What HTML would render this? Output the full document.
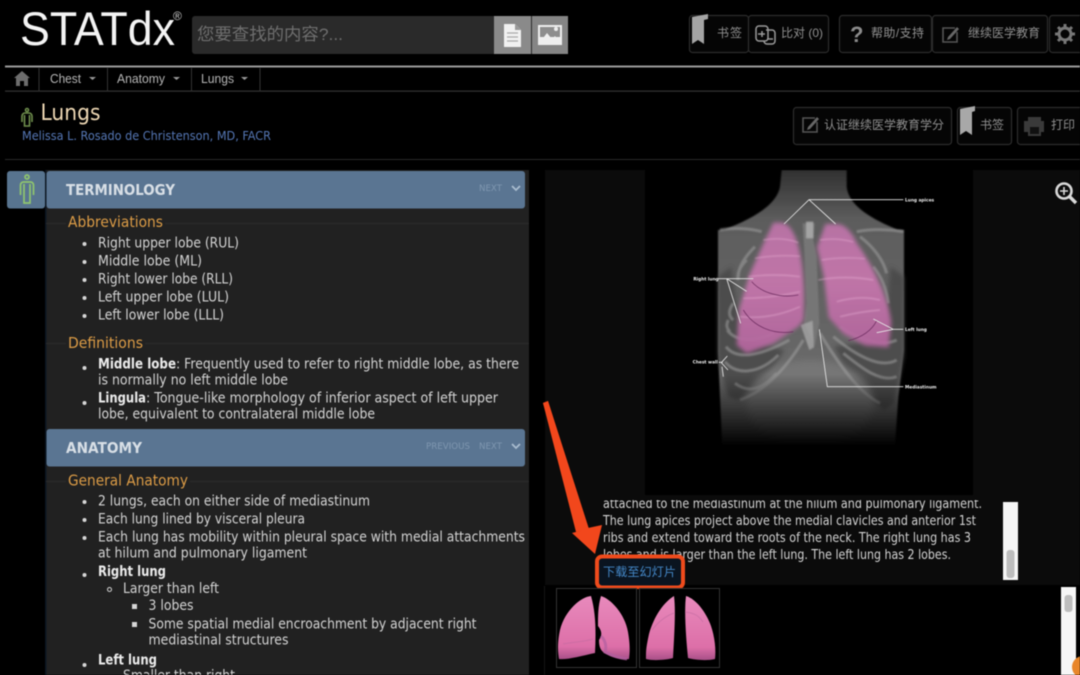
<!DOCTYPE html>
<html><head><meta charset="utf-8"><title>STATdx Lungs</title>
<style>
html,body{margin:0;padding:0;background:#000;width:1080px;height:675px;overflow:hidden}
svg{display:block;filter:blur(.45px)}
text{font-family:"DejaVu Sans","Noto Sans CJK SC",sans-serif}
.b{font-size:14px;fill:#d4d4d4}
.bb{font-size:14px;fill:#ececec;font-weight:bold}
.h{font-size:15px;fill:#dc9c46}
.cj{font-family:"Liberation Sans","Noto Sans CJK SC",sans-serif;font-size:12px;fill:#8f8f8f}
.nav{font-family:"Liberation Sans",sans-serif;font-size:12.5px;fill:#b5b5b5}
.sec{font-size:15px;font-weight:bold;fill:#d8dfe6}
.nx{font-size:9px;fill:#7f97b0}
.lab{font-weight:bold;fill:#eee}
</style></head><body>
<svg width="1080" height="675" viewBox="0 0 1080 675" xmlns="http://www.w3.org/2000/svg">
<defs>
<filter id="bl" x="-30%" y="-30%" width="160%" height="160%"><feGaussianBlur stdDeviation="10"/></filter>
<filter id="bs" x="-30%" y="-30%" width="160%" height="160%"><feGaussianBlur stdDeviation="6"/></filter>
<filter id="bt" x="-20%" y="-20%" width="140%" height="140%"><feGaussianBlur stdDeviation="2"/></filter>
<linearGradient id="fade" gradientUnits="userSpaceOnUse" x1="0" y1="0" x2="0" y2="900"><stop offset="0" stop-color="#fff"/><stop offset=".68" stop-color="#fff"/><stop offset=".92" stop-color="#000"/></linearGradient>
<mask id="fm" maskUnits="userSpaceOnUse" x="0" y="0" width="1020" height="900"><rect width="1020" height="900" fill="url(#fade)"/></mask>
<linearGradient id="body" gradientUnits="userSpaceOnUse" x1="0" y1="0" x2="0" y2="860"><stop offset="0" stop-color="#303030"/><stop offset=".17" stop-color="#5c5c5c"/><stop offset=".7" stop-color="#686868"/><stop offset="1" stop-color="#666"/></linearGradient>
<linearGradient id="pk" x1="0" y1="0" x2="0" y2="1"><stop offset="0" stop-color="#bf74aa"/><stop offset=".45" stop-color="#c877ae"/><stop offset="1" stop-color="#b5669f"/></linearGradient>
<linearGradient id="th" x1="0" y1="0" x2="0" y2="1"><stop offset="0" stop-color="#e88abc"/><stop offset=".8" stop-color="#dd6fa8"/><stop offset="1" stop-color="#a85088"/></linearGradient>
<clipPath id="tx"><rect x="590" y="500" width="410" height="85"/></clipPath>
</defs>
<rect width="1080" height="675" fill="#000"/>

<!-- logo -->
<text x="20" y="45" font-size="47" textLength="155" lengthAdjust="spacingAndGlyphs" style="font-family:'Liberation Sans',sans-serif" fill="#f4f4f4">STATdx</text>
<text x="173" y="20" font-size="12" style="font-family:'Liberation Sans',sans-serif" fill="#ccc">®</text>

<!-- search -->
<rect x="192" y="16" width="376" height="38" rx="3" fill="#2a2a2a"/>
<text x="197" y="40" font-size="17" textLength="146" lengthAdjust="spacingAndGlyphs" style="font-family:'Liberation Sans','Noto Sans CJK SC',sans-serif" fill="#6f6f6f">您要查找的内容?...</text>
<rect x="494" y="16" width="37" height="38" fill="#8a8a8a"/>
<rect x="532" y="16" width="36" height="38" fill="#858585"/>
<path d="M504 24h11l6 6v17h-17z" fill="#f1f1f1"/><path d="M515 24l6 6h-6z" fill="#999"/>
<path d="M507 33h11M507 37h11M507 41h11" stroke="#aaa" stroke-width="1.2"/>
<rect x="538" y="25" width="24" height="20" fill="#eee"/>
<rect x="540" y="27" width="20" height="10" fill="#8d8d8d"/>
<path d="M540 42l7-9 5 6 3-3 5 6z" fill="#eee"/><circle cx="556" cy="29" r="2" fill="#eee"/>

<!-- top buttons -->
<g fill="#050505" stroke="#2c2c2c" stroke-width="1.2">
<rect x="689.500" y="15.500" width="59" height="37" rx="3"/>
<rect x="748.500" y="15.500" width="80" height="37" rx="3"/>
<rect x="839.500" y="15.500" width="92" height="37" rx="3"/>
<rect x="932.500" y="15.500" width="115" height="37" rx="3"/>
<rect x="1049.500" y="15.500" width="40" height="37" rx="3"/>
<rect x="793.500" y="107.500" width="158" height="37" rx="3"/>
<rect x="957.500" y="107.500" width="54" height="37" rx="3"/>
<rect x="1017.500" y="107.500" width="70" height="37" rx="3"/>
</g>
<path d="M692 17l16-3v5l-4 1v24l-6-4-6 4z" fill="#a4a4a4"/>
<text x="717" y="37" class="cj" textLength="25">书签</text>
<g fill="none" stroke="#9a9a9a" stroke-width="1.5"><path d="M762 26h-3a3 3 0 0 0-3 3v9a3 3 0 0 0 3 3h6a3 3 0 0 0 3-3v-9a3 3 0 0 0-3-3z"/><path d="M766 30h6a3 3 0 0 1 3 3v8a3 3 0 0 1-3 3h-5a3 3 0 0 1-3-3"/><path d="M758 34h7M762 31v6M767 39h6"/></g>
<text x="781" y="37" class="cj" textLength="42">比对 (0)</text>
<text x="850" y="42" font-size="22" font-weight="bold" style="font-family:'Liberation Sans',sans-serif" fill="#8c8c8c">?</text>
<text x="871" y="37" class="cj" textLength="53">帮助/支持</text>
<g fill="none" stroke="#555" stroke-width="1.6"><path d="M955 28h-12v14h14v-10"/></g><path d="M948 37l9-10 2 2-9 10-3 1z" fill="#666"/>
<text x="968" y="37" class="cj" textLength="72">继续医学教育</text>
<g fill="none" stroke="#777" stroke-width="3"><circle cx="1065" cy="34" r="6"/><path d="M1065 24v4M1065 40v4M1055 34h4M1071 34h4M1058 27l3 3M1069 38l3 3M1072 27l-3 3M1061 38l-3 3"/></g>

<path d="M960 109l15-3v5l-3 1v23l-6-4-6 4z" fill="#a8a8a8"/>
<text x="980" y="129" class="cj" textLength="24">书签</text>
<g fill="none" stroke="#555" stroke-width="1.6"><path d="M815 118h-12v14h14v-10"/></g><path d="M808 127l9-10 2 2-9 10-3 1z" fill="#666"/>
<text x="824" y="129" class="cj" textLength="120">认证继续医学教育学分</text>
<path d="M1028 117h13v4h3v11h-3v4h-13v-4h-4v-11h4z" fill="#3a3a3a"/><rect x="1030" y="127" width="9" height="7" fill="#111"/>
<text x="1051" y="129" class="cj" textLength="24">打印</text>

<!-- header lines -->
<rect x="5" y="65.500" width="1075" height="2" fill="#9a9a9a"/>
<rect x="5" y="90.500" width="1075" height="1.200" fill="#333"/>
<rect x="5" y="159" width="1075" height="1" fill="#2a2a2a"/>

<!-- nav -->
<path d="M22 71l8 7h-2v8h-4v-5h-4v5h-4v-8h-2z" fill="#6d6d6d"/>
<g fill="#333"><rect x="38.500" y="68" width="1" height="23"/><rect x="107" y="68" width="1" height="23"/><rect x="191" y="68" width="1" height="23"/><rect x="259.500" y="68" width="1" height="23"/></g>
<text x="50" y="83" class="nav" textLength="31" lengthAdjust="spacingAndGlyphs">Chest</text>
<text x="117" y="83" class="nav" textLength="48" lengthAdjust="spacingAndGlyphs">Anatomy</text>
<text x="201" y="83" class="nav" textLength="33" lengthAdjust="spacingAndGlyphs">Lungs</text>
<g fill="#999"><path d="M89 77h7l-3.500 3z"/><path d="M173 77h7l-3.500 3z"/><path d="M241 77h7l-3.500 3z"/></g>

<!-- title -->
<g fill="none" stroke="#6f8f4d" stroke-width="1.600"><circle cx="27" cy="110" r="1.500"/><path d="M22 122v-6a3 3 0 0 1 3-3h4a3 3 0 0 1 3 3v6"/><path d="M24.500 115v11h5v-11"/></g>
<text x="40.500" y="120" font-size="22" textLength="60" lengthAdjust="spacingAndGlyphs" fill="#eed8b4">Lungs</text>
<text x="22" y="140" font-size="12.500" textLength="249" lengthAdjust="spacingAndGlyphs" fill="#5577b5">Melissa L. Rosado de Christenson, MD, FACR</text>

<!-- left panel -->
<rect x="46" y="170" width="483" height="505" fill="#212121"/>
<rect x="45" y="170" width="1.500" height="505" fill="#0c1622"/>
<rect x="7" y="171" width="38" height="37.500" rx="3" fill="#58748f"/>
<g fill="none" stroke="#8fc56e" stroke-width="1.700"><circle cx="27" cy="177" r="2"/><path d="M20.500 195v-10a3 3 0 0 1 3-3h7a3 3 0 0 1 3 3v10"/><path d="M24 184v19h6v-19"/></g>
<rect x="46.500" y="171" width="478.500" height="37.500" rx="3" fill="#5a7592"/>
<rect x="46.500" y="429" width="478.500" height="37.500" rx="3" fill="#5a7592"/>
<text x="66" y="195" class="sec" textLength="109" lengthAdjust="spacingAndGlyphs">TERMINOLOGY</text>
<text x="66" y="453" class="sec" textLength="76" lengthAdjust="spacingAndGlyphs">ANATOMY</text>
<text x="479" y="191" class="nx" textLength="23" lengthAdjust="spacingAndGlyphs">NEXT</text>
<text x="479" y="449" class="nx" textLength="23" lengthAdjust="spacingAndGlyphs">NEXT</text>
<text x="426" y="449" class="nx" textLength="44" lengthAdjust="spacingAndGlyphs">PREVIOUS</text>
<path d="M512 186l4 4 4-4M512 444l4 4 4-4" fill="none" stroke="#a9bccf" stroke-width="1.800"/>

<!-- heading rules -->
<g fill="#2c2c2c"><rect x="46" y="223" width="20" height="1"/><rect x="165" y="223" width="364" height="1"/><rect x="46" y="343" width="20" height="1"/><rect x="145" y="343" width="384" height="1"/><rect x="46" y="481" width="20" height="1"/><rect x="190" y="481" width="339" height="1"/></g>

<text x="68" y="227" class="h" textLength="95" lengthAdjust="spacingAndGlyphs">Abbreviations</text>
<text x="68" y="348" class="h" textLength="75" lengthAdjust="spacingAndGlyphs">Definitions</text>
<text x="68" y="485.500" class="h" textLength="120" lengthAdjust="spacingAndGlyphs">General Anatomy</text>

<g fill="#d6d6d6">
<circle cx="84.500" cy="244" r="2"/><circle cx="84.500" cy="262" r="2"/><circle cx="84.500" cy="280" r="2"/><circle cx="84.500" cy="298" r="2"/><circle cx="84.500" cy="316" r="2"/><circle cx="84.500" cy="368" r="2"/><circle cx="84.500" cy="403" r="2"/>
<circle cx="84.500" cy="502" r="2"/><circle cx="84.500" cy="520" r="2"/><circle cx="84.500" cy="538" r="2"/><circle cx="84.500" cy="575" r="2"/><circle cx="84.500" cy="665" r="2"/>
<rect x="132" y="604" width="5" height="5"/><rect x="132" y="622" width="5" height="5"/>
</g>
<circle cx="109.500" cy="589.500" r="2" fill="none" stroke="#d6d6d6" stroke-width="1"/>

<text x="98" y="247.500" class="b" textLength="141" lengthAdjust="spacingAndGlyphs">Right upper lobe (RUL)</text>
<text x="98" y="265.500" class="b" textLength="104" lengthAdjust="spacingAndGlyphs">Middle lobe (ML)</text>
<text x="98" y="283.500" class="b" textLength="135" lengthAdjust="spacingAndGlyphs">Right lower lobe (RLL)</text>
<text x="98" y="301.500" class="b" textLength="131" lengthAdjust="spacingAndGlyphs">Left upper lobe (LUL)</text>
<text x="98" y="319.500" class="b" textLength="126" lengthAdjust="spacingAndGlyphs">Left lower lobe (LLL)</text>
<text x="98" y="368.500" class="bb" textLength="78" lengthAdjust="spacingAndGlyphs">Middle lobe</text>
<text x="176" y="368.500" class="b" textLength="343" lengthAdjust="spacingAndGlyphs">: Frequently used to refer to right middle lobe, as there</text>
<text x="98" y="384.500" class="b" textLength="190" lengthAdjust="spacingAndGlyphs">is normally no left middle lobe</text>
<text x="98" y="402.500" class="bb" textLength="48" lengthAdjust="spacingAndGlyphs">Lingula</text>
<text x="146" y="402.500" class="b" textLength="352" lengthAdjust="spacingAndGlyphs">: Tongue-like morphology of inferior aspect of left upper</text>
<text x="98" y="418.500" class="b" textLength="277" lengthAdjust="spacingAndGlyphs">lobe, equivalent to contralateral middle lobe</text>
<text x="98" y="505.500" class="b" textLength="272" lengthAdjust="spacingAndGlyphs">2 lungs, each on either side of mediastinum</text>
<text x="98" y="523.500" class="b" textLength="207" lengthAdjust="spacingAndGlyphs">Each lung lined by visceral pleura</text>
<text x="98" y="541.500" class="b" textLength="427" lengthAdjust="spacingAndGlyphs">Each lung has mobility within pleural space with medial attachments</text>
<text x="98" y="557.500" class="b" textLength="209" lengthAdjust="spacingAndGlyphs">at hilum and pulmonary ligament</text>
<text x="98" y="576" class="bb" textLength="68" lengthAdjust="spacingAndGlyphs">Right lung</text>
<text x="123" y="593" class="b" textLength="96" lengthAdjust="spacingAndGlyphs">Larger than left</text>
<text x="148.500" y="610" class="b" textLength="45" lengthAdjust="spacingAndGlyphs">3 lobes</text>
<text x="148.500" y="628.500" class="b" textLength="328" lengthAdjust="spacingAndGlyphs">Some spatial medial encroachment by adjacent right</text>
<text x="148.500" y="644.500" class="b" textLength="140" lengthAdjust="spacingAndGlyphs">mediastinal structures</text>
<text x="98" y="664.500" class="bb" textLength="59" lengthAdjust="spacingAndGlyphs">Left lung</text>
<text x="123" y="680" class="b" textLength="112" lengthAdjust="spacingAndGlyphs">Smaller than right</text>

<!-- right panel -->
<rect x="545" y="170" width="535" height="415" fill="#0b0b0b"/>
<rect x="645" y="170" width="328" height="325" fill="#000"/>

<!-- anatomical image, coordinates from 3x crop -->
<g transform="translate(640 170) scale(.33333)">
<g mask="url(#fm)">
<path d="M425 0H620V50C625 105 690 145 770 178L792 180V540L775 680 760 900H250L240 680 234 540V180L255 178C340 145 410 105 420 50Z" fill="url(#body)" filter="url(#bt)"/>
<path d="M234 320l40-30 30 220 130 30-60 90-80 60-30-10-30-120z" fill="#454545" filter="url(#bs)" opacity=".75"/>
<path d="M792 320l-40-30-20 220-150 20 60 110 90 80 30-20 30-140z" fill="#454545" filter="url(#bs)" opacity=".75"/>
<ellipse cx="510" cy="700" rx="190" ry="130" fill="#767676" filter="url(#bl)"/>
<g fill="none" stroke="#a0a0a0" stroke-width="9" opacity=".55" filter="url(#bt)">
<path d="M240 180c40-8 90-5 125 5M650 185c40-8 90-8 140 0"/>
<path d="M300 690c60-20 130-80 190-180M720 700c-60-30-120-110-180-210"/>
<path d="M258 530c30 40 100 30 190-20M262 480c20 30 70 40 140 10M255 575c30 40 100 40 160-20M285 640c40 30 80 20 125-30"/>
<path d="M770 570c-50 30-130-20-190-70M770 620c-50 20-110-30-160-70M770 510c-40 20-110 0-170-40"/>
<path d="M345 230c-30 30-50 60-50 90M320 270c-20 20-30 40-25 60M280 400c-15 20-15 40 0 50M265 450c-8 15-5 25 5 35"/>
<path d="M660 200c40 30 70 70 80 110M700 290c25 30 40 70 45 110"/>
</g>
<path d="M488 160h36l-4 50 10 50 8 200-14 70-16-40-16-30 8-60-8-170z" fill="#767676" filter="url(#bt)"/>
<path d="M498 155h22v50h-22z" fill="#b0b0b0" filter="url(#bt)" opacity=".8"/>
<path d="M482 465l26 75 14-8-4-80z" fill="#aaa" opacity=".75" filter="url(#bt)"/>
<g opacity=".92">
<path d="M420 158c28 0 42 30 52 60 18 60 24 150 18 232l-15 20-75 50-80 30-30-25 8-110 30-100 45-100 27-57z" fill="url(#pk)" filter="url(#bs)"/>
<path d="M590 162c28 0 48 30 62 60 50 70 92 160 102 235l-8 75-70-5-65-35-45-50-15-125-20-85 25-70z" fill="url(#pk)" filter="url(#bs)"/>
</g>
<g fill="none" stroke="#f0b8dc" stroke-width="3.500" opacity=".5" filter="url(#bt)">
<path d="M370 210q60-10 105 8M345 265q70-12 135-6M325 320q80-10 155 0M310 385q80 0 170-20M300 440q90 10 180-30"/>
<path d="M540 210q50-8 100 6M545 270q60-10 130-4M535 330q80-15 165 0M590 395q70-20 130-5M600 440q60-15 120-20"/>
</g>
<g fill="none" stroke="#6b2a5e" stroke-width="2.500" opacity=".85">
<path d="M335 335c30 35 90 50 140 40"/>
<path d="M310 420c30 50 90 75 150 65"/>
<path d="M625 512c40-10 70-30 85-60"/>
</g>
</g>
<g fill="none" stroke="#e6e6e6" stroke-width="2.600">
<path d="M432 162l75-73 80 73M507 89H790"/>
<path d="M235 326h105M260 326l60 38M260 326l42 134"/>
<path d="M700 447l60 31M710 488l50-10M760 478h30"/>
<path d="M236 577h12M262 558l-18 20 20 22M246 590l4 30"/>
<path d="M538 478l24 172h228"/>
</g>
<text x="795" y="94" class="lab" style="font-size:13px">Lung apices</text>
<text x="160" y="331" class="lab" style="font-size:13px">Right lung</text>
<text x="795" y="483" class="lab" style="font-size:13px">Left lung</text>
<text x="158" y="581" class="lab" style="font-size:13px">Chest wall</text>
<text x="795" y="655" class="lab" style="font-size:13px">Mediastinum</text>
</g>

<!-- zoom icon -->
<circle cx="1064" cy="191" r="7.500" fill="none" stroke="#d8d8d8" stroke-width="2.600"/>
<path d="M1060 191h8M1064 187v8" stroke="#d8d8d8" stroke-width="1.600"/>
<path d="M1070 197l6 6" stroke="#d8d8d8" stroke-width="3.400"/>

<!-- caption -->
<g clip-path="url(#tx)">
<text x="603" y="508" class="b" style="font-size:13.500px" textLength="379" lengthAdjust="spacingAndGlyphs">attached to the mediastinum at the hilum and pulmonary ligament.</text>
<text x="603" y="525" class="b" style="font-size:13.500px" textLength="373" lengthAdjust="spacingAndGlyphs">The lung apices project above the medial clavicles and anterior 1st</text>
<text x="603" y="542" class="b" style="font-size:13.500px" textLength="368" lengthAdjust="spacingAndGlyphs">ribs and extend toward the roots of the neck. The right lung has 3</text>
<text x="603" y="559" class="b" style="font-size:13.500px" textLength="348" lengthAdjust="spacingAndGlyphs">lobes and is larger than the left lung. The left lung has 2 lobes.</text>
</g>
<rect x="1003" y="502" width="15" height="78" fill="#f6f6f6"/>
<rect x="1006.500" y="550" width="8" height="28" rx="3" fill="#bdbdbd"/>

<!-- arrow + red box -->
<path d="M543 403l5-2 40 127 14-3-7 29-23-21 11-3z" fill="#f2471c"/>
<path d="M543 403l5-2 41 128-13 3z" fill="#f2471c"/>
<rect x="597" y="556.500" width="86" height="31" rx="5" fill="#0a1420" stroke="#ef4b1c" stroke-width="4"/>
<text x="603" y="576" font-size="12" textLength="73" lengthAdjust="spacingAndGlyphs" style="font-family:'Liberation Sans','Noto Sans CJK SC',sans-serif" fill="#4488c8">下载至幻灯片</text>

<!-- thumbnails -->
<rect x="545" y="589" width="535" height="86" fill="#000"/>
<rect x="544" y="586" width="1" height="89" fill="#151515"/>
<rect x="556.500" y="588.500" width="80" height="79" fill="#000" stroke="#333"/>
<rect x="639.500" y="588.500" width="80" height="79" fill="#000" stroke="#333"/>
<path d="M591 596c-10 1-26 14-31 34-3 14-2 23-1 29 8 1 22-3 36-6 1-20 1-40-4-57z" fill="url(#th)"/>
<path d="M601 596c10 3 24 18 27 36 2 12 2 19 1 27-8 1-16-1-23-5-6-3-7-8-7-14 4-6 2-10-1-14 0-10 0-20 3-30z" fill="url(#th)"/>
<path d="M601 636c4 4 6 10 4 16 6 3 14 6 22 7" fill="none" stroke="#b060a0" stroke-width="3" opacity=".7"/>
<path d="M563 644c10-2 20-2 30-5" stroke="#c06aa0" fill="none" opacity=".6"/>
<path d="M674 596c-10 6-20 20-25 38-3 14-3 17-3 25 7 2 20 1 27-1 1-20 3-47 1-62z" fill="url(#th)"/>
<path d="M686 596c10 3 20 16 25 30 4 12 5 24 4 33-8 2-20 1-27-1-2-20-4-47-2-62z" fill="url(#th)"/>
<path d="M652 630c6-8 14-14 22-17M685 612c10 1 14 4 18 10" fill="none" stroke="#c06aa0" opacity=".6"/>
<rect x="1061" y="587" width="15" height="88" fill="#f6f6f6"/>
<rect x="1064.500" y="595" width="8" height="17" rx="3" fill="#bdbdbd"/>
<circle cx="1083" cy="667" r="11" fill="#e8862a"/>
</svg>
</body></html>
